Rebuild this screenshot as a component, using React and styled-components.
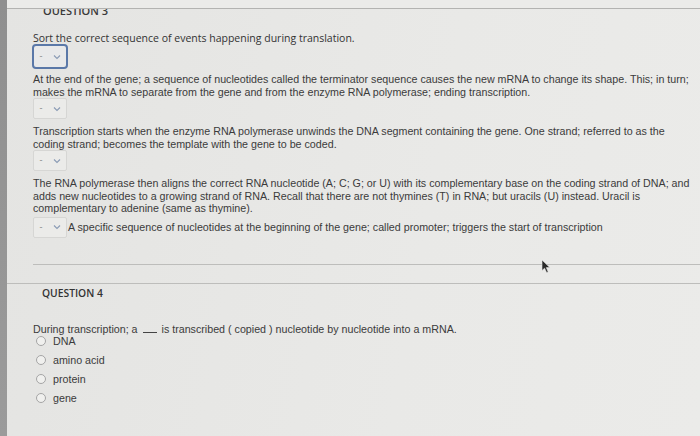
import styled, { createGlobalStyle } from "styled-components";

const GlobalStyle = createGlobalStyle`
	html, body {
		margin: 0;
		padding: 0;
		background: #e7e7e5;
	}
	body {
		font-family: "Liberation Sans", Arial, sans-serif;
		color: #3b3b3b;
	}
`;

const sortItems = [
	"At the end of the gene; a sequence of nucleotides called the terminator sequence causes the new mRNA to change its shape. This; in turn; makes the mRNA to separate from the gene and from the enzyme RNA polymerase; ending transcription.",
	"Transcription starts when the enzyme RNA polymerase unwinds the DNA segment containing the gene. One strand; referred to as the coding strand; becomes the template with the gene to be coded.",
	"The RNA polymerase then aligns the correct RNA nucleotide (A; C; G; or U) with its complementary base on the coding strand of DNA; and adds new nucleotides to a growing strand of RNA. Recall that there are not thymines (T) in RNA; but uracils (U) instead. Uracil is complementary to adenine (same as thymine).",
];

const options = ["DNA", "amino acid", "protein", "gene"];

const Chevron = () => (
	<svg width="8" height="6" viewBox="0 0 8 6">
		<path d="M1 1.5 L4 4.5 L7 1.5" fill="none" stroke="#8a9bb5" strokeWidth="1.1" />
	</svg>
);

const Dropdown = ({ focused }) => (
	<Select $focused={focused}>
		<Dash>-</Dash>
		<Chevron />
	</Select>
);

const App = () => {
	return (
		<>
			<GlobalStyle />
			<Screen>
				<Strip />
				<Content>
					<TopBar />
					<HeadClip>
						<ClippedTitle>QUESTION 3</ClippedTitle>
					</HeadClip>
					<Section>
						<Prompt>Sort the correct sequence of events happening during translation.</Prompt>
						{sortItems.map((text, i) => (
							<Item key={i}>
								<Dropdown focused={i === 0} />
								<Para>{text}</Para>
							</Item>
						))}
						<InlineRow>
							<Dropdown />
							<InlineText>A specific sequence of nucleotides at the beginning of the gene; called promoter; triggers the start of transcription</InlineText>
						</InlineRow>
					</Section>
					<Divider $inset />
					<Divider />
					<Section $q4>
						<Title>QUESTION 4</Title>
						<Question>
							During transcription; a <Blank /> is transcribed ( copied ) nucleotide by nucleotide into a mRNA.
						</Question>
						<Options>
							{options.map((o) => (
								<Option key={o}>
									<Radio />
									<span>{o}</span>
								</Option>
							))}
						</Options>
					</Section>
				</Content>
				<Cursor width="10" height="15" viewBox="0 0 10 15">
					<path d="M1 1 L1 11.5 L3.6 9.2 L5.6 13.6 L7.2 12.9 L5.3 8.6 L8.8 8.6 Z" fill="#2a2a2a" stroke="#e7e7e5" strokeWidth="0.6" />
				</Cursor>
			</Screen>
		</>
	);
};

export default App;

const Screen = styled.div`
	position: relative;
	display: flex;
	width: 700px;
	height: 436px;
	overflow: hidden;
	background: linear-gradient(100deg, #e4e4e2 0%, #e9e9e7 60%, #ebebe9 100%);
`;
const Strip = styled.div`
	width: 7px;
	flex-shrink: 0;
	background: linear-gradient(180deg, #8f8f8f, #9b9b9b);
`;
const Content = styled.div`
	flex: 1;
	display: flex;
	flex-direction: column;
`;
const TopBar = styled.div`
	height: 8px;
	border-bottom: 1px solid #b3b3b1;
	background: #ebebe9;
`;
const HeadClip = styled.div`
	height: 6px;
	overflow: hidden;
	padding-left: 36px;
`;
const ClippedTitle = styled.div`
	font-family: "Open Sans", sans-serif;
	font-weight: 600;
	font-size: 11px;
	line-height: 11px;
	margin-top: -4px;
	color: #3a3a3a;
`;
const Section = styled.div`
	padding-left: 26px;
	padding-top: ${(p) => (p.$q4 ? "1px" : "17px")};
	padding-bottom: ${(p) => (p.$q4 ? "0" : "26px")};
	display: flex;
	flex-direction: column;
	align-items: flex-start;
`;
const Prompt = styled.div`
	font-family: "Open Sans", sans-serif;
	font-size: 10.5px;
	line-height: 12px;
	color: #333;
	margin-bottom: 2px;
`;
const Select = styled.div`
	width: ${(p) => (p.$focused ? "36px" : "34px")};
	height: ${(p) => (p.$focused ? "25px" : "21px")};
	margin: ${(p) => (p.$focused ? "-2px 0 -2px -1px" : "0")};
	box-sizing: border-box;
	display: flex;
	align-items: center;
	justify-content: center;
	gap: 10px;
	border: ${(p) => (p.$focused ? "2px solid #5a78a8" : "1px solid #d6d6d4")};
	border-radius: ${(p) => (p.$focused ? "4px" : "2px")};
	background: ${(p) => (p.$focused ? "#e8e9ea" : "#ebebe9")};
`;
const Dash = styled.span`
	font-size: 9px;
	color: #888;
	line-height: 1;
`;
const Item = styled.div`
	display: flex;
	flex-direction: column;
	align-items: flex-start;
`;
const Para = styled.p`
	margin: 6px 0 0;
	font-size: 10.7px;
	line-height: 12.5px;
	width: 662px;
`;
const InlineRow = styled.div`
	display: flex;
	align-items: center;
	margin-top: 2px;
`;
const InlineText = styled.span`
	font-size: 10.7px;
	margin-left: 1px;
`;
const Divider = styled.div`
	height: 1px;
	background: #bdbdbb;
	margin-left: ${(p) => (p.$inset ? "26px" : "0")};
	margin-bottom: ${(p) => (p.$inset ? "18px" : "0")};
`;
const Title = styled.div`
	font-family: "Open Sans", sans-serif;
	font-weight: 600;
	font-size: 10.3px;
	line-height: 16px;
	margin-left: 9px;
	color: #333;
`;
const Question = styled.div`
	font-size: 10.7px;
	line-height: 12px;
	margin-top: 22px;
`;
const Blank = styled.span`
	display: inline-block;
	width: 14px;
	border-bottom: 1px solid #444;
	margin: 0 2px;
`;
const Options = styled.div`
	display: flex;
	flex-direction: column;
	gap: 7px;
	margin-top: 0;
`;
const Option = styled.label`
	display: flex;
	align-items: center;
	gap: 7px;
	font-size: 10.7px;
	line-height: 12px;
	padding-left: 3px;
`;
const Radio = styled.span`
	width: 10px;
	height: 10px;
	box-sizing: border-box;
	border: 1px solid #a5a5a5;
	border-radius: 50%;
	background: #f0f0ee;
`;
const Cursor = styled.svg`
	position: absolute;
	left: 541px;
	top: 259px;
`;
